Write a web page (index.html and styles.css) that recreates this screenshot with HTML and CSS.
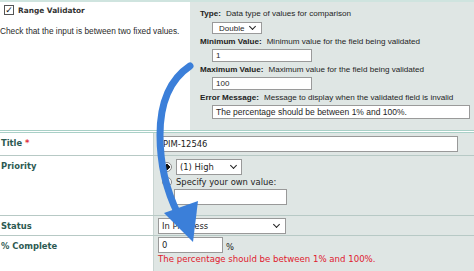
FILE: index.html
```html
<!DOCTYPE html>
<html>
<head>
    <title>Range Validator</title>
    <link rel="stylesheet" href="styles.css">
</head>
<body>
    <div class="page">
        <!-- configuracao do validador -->
        <div class="validator">
            <div class="validator-info">
                <div class="validator-title">
                    <span class="check">&#10003;</span>
                    <b>Range Validator</b>
                </div>
                <div class="validator-desc">Check that the input is between two fixed values.</div>
            </div>
            <div class="validator-panel">
                <div class="opt"><b>Type:</b><span>Data type of values for comparison</span></div>
                <div class="ctl"><div class="sel sel-type">Double<span class="chev"></span></div></div>
                <div class="opt"><b>Minimum Value:</b><span>Minimum value for the field being validated</span></div>
                <div class="ctl"><div class="box box-num">1</div></div>
                <div class="opt"><b>Maximum Value:</b><span>Maximum value for the field being validated</span></div>
                <div class="ctl"><div class="box box-num">100</div></div>
                <div class="opt"><b>Error Message:</b><span>Message to display when the validated field is invalid</span></div>
                <div class="ctl"><div class="box box-msg">The percentage should be between 1% and 100%.</div></div>
            </div>
        </div>

        <!-- formulario -->
        <div class="form">
            <div class="row row-title">
                <div class="label">Title <span class="req">*</span></div>
                <div class="field"><div class="input input-title">PIM-12546</div></div>
            </div>
            <div class="row row-priority">
                <div class="label">Priority</div>
                <div class="field">
                    <div class="line">
                        <span class="radio on"></span>
                        <div class="select select-priority">(1) High<span class="chev"></span></div>
                    </div>
                    <div class="line">
                        <span class="radio"></span>
                        <span>Specify your own value:</span>
                    </div>
                    <div class="input input-own"></div>
                </div>
            </div>
            <div class="row row-status">
                <div class="label">Status</div>
                <div class="field"><div class="select select-status">In Progress<span class="chev"></span></div></div>
            </div>
            <div class="row row-complete">
                <div class="label">% Complete</div>
                <div class="field">
                    <div class="line"><div class="input input-pct">0</div><span class="pct">%</span></div>
                    <div class="error">The percentage should be between 1% and 100%.</div>
                </div>
            </div>
        </div>

        <svg class="arrow" width="474" height="271" viewBox="0 0 474 271">
            <path d="M190 66 C 172 78, 160 100, 160 135 C 160 165, 166 190, 178 214" fill="none" stroke="#3b7fd9" stroke-width="7" stroke-linecap="round"/>
            <polygon points="193,242 164,213 198,201" fill="#3b7fd9"/>
        </svg>
    </div>
</body>
</html>
```

FILE: styles.css
```css
body {
    margin: 0;
    padding: 0;
    overflow: hidden;
    background: #ffffff;
    font-family: "DejaVu Sans", Verdana, sans-serif;
    color: #222;
}

.page {
    position: relative;
    width: 474px;
    height: 271px;
    border-top: 2px solid #cfe4df;
    box-sizing: border-box;
}

.validator {
    display: flex;
    height: 128px;
    border-bottom: 1px solid #a9d0c7;
}

.validator-info {
    width: 190px;
    font-family: "Liberation Sans", Tahoma, sans-serif;
    font-size: 8.3px;
}

.validator-title {
    display: flex;
    align-items: center;
    gap: 4px;
    padding: 3px 0 0 4px;
    font-family: "DejaVu Sans", Verdana, sans-serif;
    font-size: 7.4px;
    color: #333;
}

.check {
    display: inline-block;
    width: 8px;
    height: 8px;
    border: 1px solid #555;
    font-size: 9px;
    line-height: 8px;
    text-align: center;
    color: #111;
}

.validator-desc {
    margin-top: 11px;
    color: #2a2a2a;
}

.validator-panel {
    flex: 1;
    background: #dfe6e4;
    padding: 7px 0 0 10px;
    font-family: "Liberation Sans", Tahoma, sans-serif;
    font-size: 8.1px;
    color: #1e1e1e;
}

.opt {
    display: flex;
    gap: 5px;
    height: 10px;
    line-height: 10px;
}

.opt b {
    color: #222;
}

.ctl {
    padding: 2px 0 0 12px;
    height: 18px;
    box-sizing: border-box;
}

.box, .sel {
    background: #fff;
    border: 1px solid #9a9a9a;
    box-sizing: border-box;
    font-size: 8px;
    padding-left: 3px;
    display: flex;
    align-items: center;
}

.sel-type {
    width: 50px;
    height: 12px;
    margin-top: 1px;
    gap: 6px;
    padding-left: 6px;
}

.box-num {
    width: 100px;
    height: 13px;
}

.box-msg {
    width: 258px;
    height: 14px;
    font-size: 8.5px;
}

.chev {
    display: inline-block;
    width: 4px;
    height: 4px;
    border-right: 1.4px solid #222;
    border-bottom: 1.4px solid #222;
    transform: rotate(45deg);
    margin-top: -3px;
}

.form {
    border-top: 1px solid #a9d0c7;
    margin-top: 1px;
    font-size: 8.4px;
}

.row {
    display: flex;
    border-bottom: 1px solid #b7c9c5;
}

.label {
    width: 154px;
    padding: 5px 0 0 1px;
    box-sizing: border-box;
    font-weight: bold;
    color: #2d5a52;
    font-size: 8.4px;
    border-right: 1px solid #c8d4d1;
}

.req {
    color: #e0303a;
}

.field {
    flex: 1;
    background: #dfe6e4;
    padding: 3px 0 3px 5px;
    display: flex;
    flex-direction: column;
    gap: 3px;
}

.line {
    display: flex;
    align-items: center;
    gap: 3px;
}

.input, .select {
    background: #fff;
    border: 1px solid #999;
    box-sizing: border-box;
    height: 16px;
    padding-left: 3px;
    display: flex;
    align-items: center;
    font-size: 8.4px;
    color: #222;
}

.input-title {
    width: 299px;
}

.row-priority .field {
    padding-left: 8px;
    gap: 2px;
}

.radio {
    display: inline-block;
    width: 8px;
    height: 8px;
    border-radius: 50%;
    border: 1px solid #888;
    background: #fff;
    margin-right: 1px;
}

.radio.on {
    background: radial-gradient(circle, #111 45%, #fff 50%);
}

.select-priority {
    width: 66px;
    justify-content: space-between;
    padding-right: 5px;
}

.input-own {
    width: 113px;
    margin-left: 12px;
}

.row-priority {
    height: 59px;
}

.row-status .field {
    padding: 2px 0 1px 4px;
}

.select-status {
    width: 128px;
    justify-content: space-between;
    padding-right: 6px;
}

.row-complete {
    border-bottom: none;
    height: 40px;
}

.row-complete .field {
    padding: 1px 0 0 4px;
    gap: 1px;
}

.input-pct {
    width: 65px;
}

.pct {
    font-size: 8.4px;
    margin-top: 4px;
}

.error {
    color: #e0202e;
    font-size: 8.6px;
}

/* seta desenhada por cima */
.arrow {
    position: absolute;
    left: 0;
    top: -2px;
    pointer-events: none;
}
```
